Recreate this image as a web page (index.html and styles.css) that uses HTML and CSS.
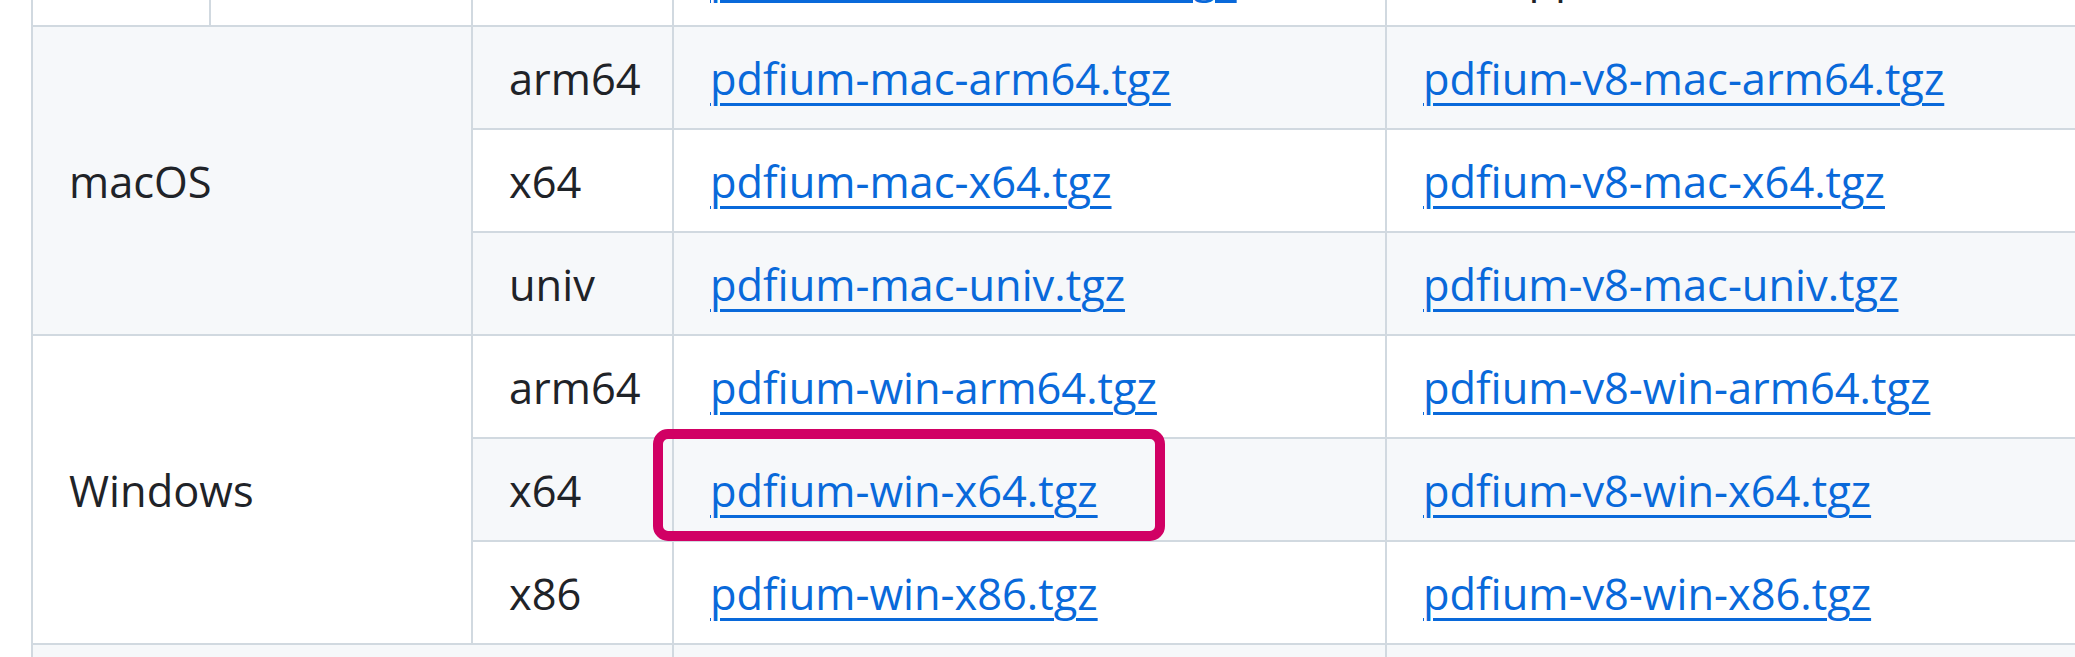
FILE: index.html
```html
<!DOCTYPE html>
<html lang="en">
<head>
<meta charset="utf-8">
<title>PDFium binaries</title>
<link rel="stylesheet" href="styles.css">
</head>
<body>
<div class="page">
  <table class="downloads">
    <colgroup>
      <col class="c-os">
      <col class="c-libc">
      <col class="c-cpu">
      <col class="c-lib">
      <col class="c-v8">
    </colgroup>
    <tbody>
      <tr>
        <td></td>
        <td>musl</td>
        <td>x86</td>
        <td><a href="#">pdfium-linux-musl-x86.tgz</a></td>
        <td>Unsupported</td>
      </tr>
      <tr>
        <td colspan="2" rowspan="3">macOS</td>
        <td>arm64</td>
        <td><a href="#">pdfium-mac-arm64.tgz</a></td>
        <td><a href="#">pdfium-v8-mac-arm64.tgz</a></td>
      </tr>
      <tr>
        <td>x64</td>
        <td><a href="#">pdfium-mac-x64.tgz</a></td>
        <td><a href="#">pdfium-v8-mac-x64.tgz</a></td>
      </tr>
      <tr>
        <td>univ</td>
        <td><a href="#">pdfium-mac-univ.tgz</a></td>
        <td><a href="#">pdfium-v8-mac-univ.tgz</a></td>
      </tr>
      <tr>
        <td colspan="2" rowspan="3">Windows</td>
        <td>arm64</td>
        <td><a href="#">pdfium-win-arm64.tgz</a></td>
        <td><a href="#">pdfium-v8-win-arm64.tgz</a></td>
      </tr>
      <tr>
        <td>x64</td>
        <td><a class="marked" href="#">pdfium-win-x64.tgz</a></td>
        <td><a href="#">pdfium-v8-win-x64.tgz</a></td>
      </tr>
      <tr>
        <td>x86</td>
        <td><a href="#">pdfium-win-x86.tgz</a></td>
        <td><a href="#">pdfium-v8-win-x86.tgz</a></td>
      </tr>
      <tr>
        <td colspan="3">WASM</td>
        <td><a href="#">pdfium-wasm.tgz</a></td>
        <td>Unsupported</td>
      </tr>
    </tbody>
  </table>
</div>
</body>
</html>
```
FILE: styles.css
```css
html, body {
  margin: 0;
  padding: 0;
  overflow: hidden;
  background: #ffffff;
}

body {
  font-family: "Open Sans", "Noto Sans", "DejaVu Sans", sans-serif;
  color: #1f2328;
}

.page {
  margin-top: -78px;
  padding-left: 31px;
  overflow: hidden;
}

.downloads {
  border-collapse: collapse;
  table-layout: fixed;
  width: 2074px;
}

.c-os { width: 178px; }
.c-libc { width: 262px; }
.c-cpu { width: 201px; }
.c-lib { width: 713px; }
.c-v8 { width: 720px; }

.downloads td {
  border: 2px solid #d1d9e0;
  padding: 18px 36px 16px;
  font-size: 43.4px;
  line-height: 67px;
  white-space: nowrap;
  vertical-align: middle;
  background: #ffffff;
}

.downloads tr:nth-child(even) td {
  background: #f6f8fa;
}

.downloads a {
  color: #0969da;
  text-decoration: underline;
  text-decoration-thickness: 3px;
  text-underline-offset: 8px;
}

.marked {
  position: relative;
}

.marked::after {
  content: "";
  position: absolute;
  left: -57px;
  right: -67px;
  top: -32px;
  bottom: -21px;
  border: 10px solid #d10064;
  border-radius: 15px;
  pointer-events: none;
}
```
